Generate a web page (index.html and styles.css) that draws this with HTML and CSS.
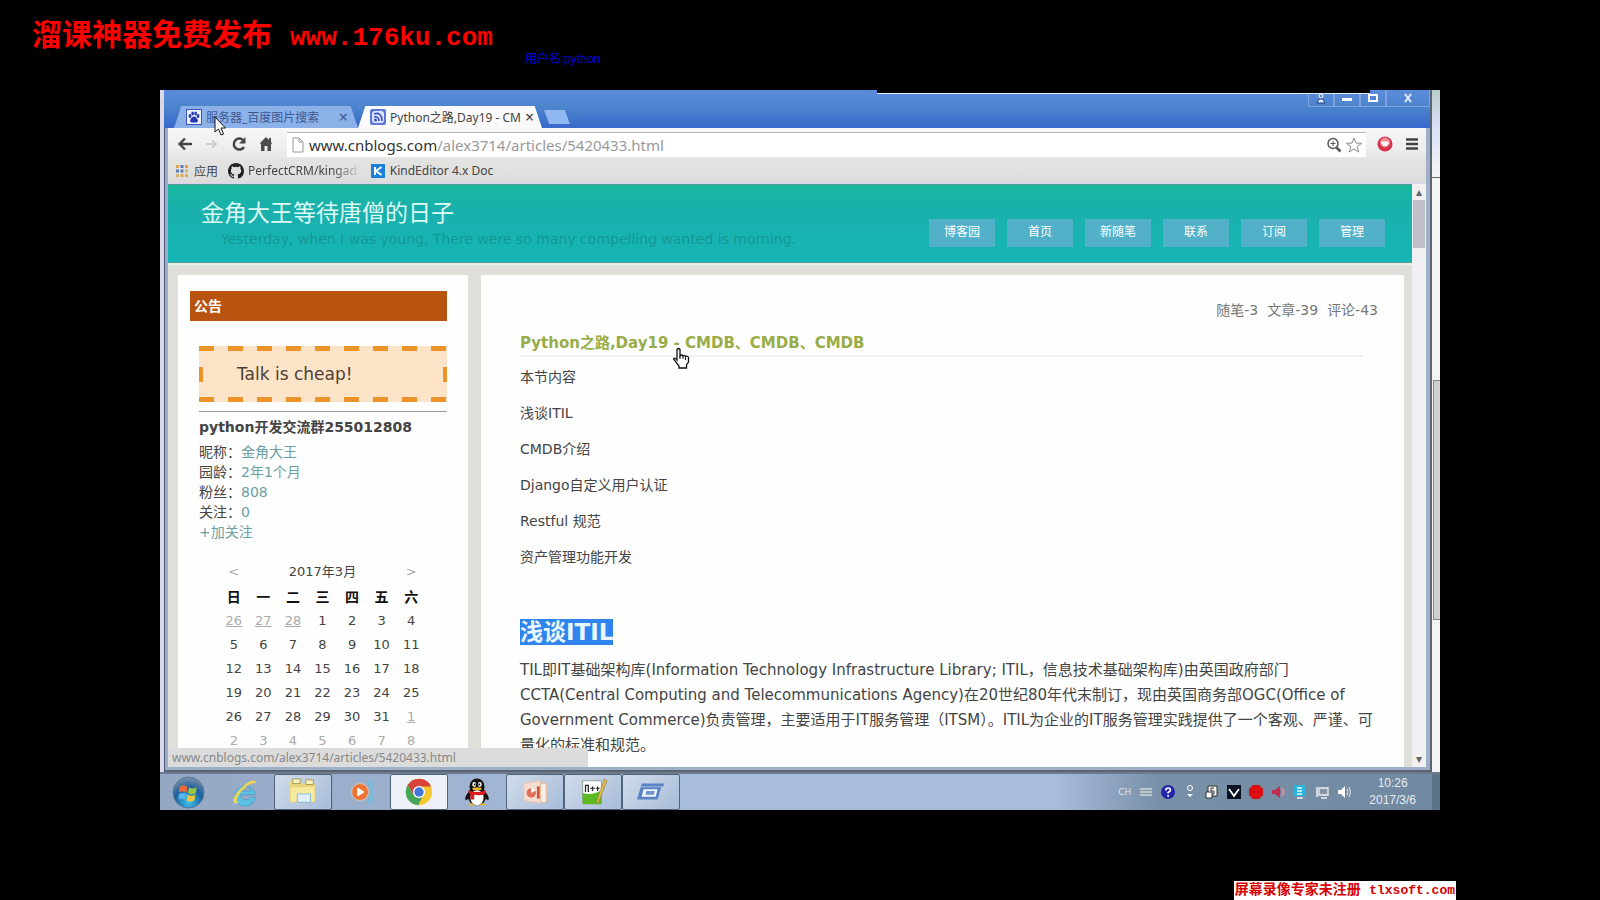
FILE: index.html
```
<!DOCTYPE html>
<html lang="zh-CN">
<head>
  <meta charset="utf-8">
  <title>Python之路,Day19</title>
  <meta name="viewport" content="width=device-width, initial-scale=1">
  <link rel="stylesheet" href="styles.css">
</head>
<body>

  <header class="banner">
    <p class="promo">溜课神器免费发布 <span class="promo-url">www.176ku.com</span></p>
    <p class="user-name">用户名:python</p>
  </header>

  <div class="desktop">
    <div class="workspace">
      <div class="window">

        <div class="title-bar">
          <div class="tabs">
            <div class="tab">
              <svg class="tab-icon" viewBox="0 0 16 16"><rect width="16" height="16" fill="#3a54c0"/><rect x="1" y="1" width="14" height="14" fill="#eef2ff"/><g fill="#2438b0"><ellipse cx="4" cy="7" rx="1.4" ry="2"/><ellipse cx="6.6" cy="4.4" rx="1.3" ry="2"/><ellipse cx="9.6" cy="4.4" rx="1.3" ry="2"/><ellipse cx="12" cy="7" rx="1.4" ry="2"/><path d="M8 7.500c2 0 4 3 4 4.500s-1.500 1.500-4 1.500-4 0-4-1.500 2-4.500 4-4.500z"/></g></svg>
              <span class="tab-text">服务器_百度图片搜索</span>
              <button class="tab-close" aria-label="关闭">×</button>
            </div>
            <div class="tab tab-active">
              <svg class="tab-icon" viewBox="0 0 16 16"><rect width="16" height="16" rx="2" fill="#5f78d8"/><rect x="2" y="2" width="12" height="12" rx="3" fill="#dfe6ff"/><path d="M4 5c5-2 8 1 8 7M4 8c3-1 5 1 5 4" fill="none" stroke="#3c50c8" stroke-width="1.600"/><circle cx="5.500" cy="11" r="1.500" fill="#3c50c8"/></svg>
              <span class="tab-text">Python之路,Day19 - CM</span>
              <button class="tab-close" aria-label="关闭">×</button>
            </div>
            <button class="new-tab" aria-label="新标签页"></button>
          </div>
          <div class="window-buttons">
            <button aria-label="用户"><svg viewBox="0 0 12 12"><circle cx="6" cy="4" r="2" fill="none" stroke="#fff"/><path d="M2 11l2-4h4l2 4z" fill="#dfe8fa" stroke="#1f3d86"/></svg></button>
            <button aria-label="最小化"><svg viewBox="0 0 12 12"><rect x="1" y="6" width="10" height="3" fill="#fff"/></svg></button>
            <button aria-label="最大化"><svg viewBox="0 0 12 12"><rect x="2" y="3" width="8" height="6" fill="none" stroke="#fff" stroke-width="2"/></svg></button>
            <button class="wide" aria-label="关闭窗口"><svg viewBox="0 0 12 12"><path d="M3 2l6 8M9 2l-6 8" stroke="#e6eefc" stroke-width="2"/></svg></button>
          </div>
        </div>

        <div class="toolbar">
          <button class="tool" aria-label="后退"><svg viewBox="0 0 16 16"><path d="M15 8H3M8 2.500L2.500 8 8 13.500" fill="none" stroke="#444" stroke-width="2.400"/></svg></button>
          <button class="tool" aria-label="前进"><svg viewBox="0 0 16 16"><path d="M2 8h10M8 4l4 4-4 4" fill="none" stroke="#cfcfcf" stroke-width="2"/></svg></button>
          <button class="tool" aria-label="刷新"><svg viewBox="0 0 16 16"><path d="M13 11a5.500 5.500 0 1 1-1-7" fill="none" stroke="#444" stroke-width="2.500"/><path d="M14.500 1v6.500H8z" fill="#444"/></svg></button>
          <button class="tool" aria-label="主页"><svg viewBox="0 0 16 16"><path d="M8 1l6 6-1 1.500V15h-3.500v-5h-3v5H3V8.500L2 7z" fill="#4c4c4c"/><path d="M11 2h2v4h-2z" fill="#4c4c4c"/></svg></button>
          <label class="address">
            <svg class="page-icon" viewBox="0 0 14 16"><path d="M2 1h6l4 4v10H2zM8 1v4h4" fill="#fff" stroke="#999"/></svg>
            <span class="address-text" role="textbox">www.cnblogs.com<span class="path">/alex3714/articles/5420433.html</span></span>
            <svg class="address-icon" viewBox="0 0 16 16"><circle cx="7" cy="6.500" r="5" fill="none" stroke="#555" stroke-width="1.500"/><path d="M4.500 6.500h5M7 4v5" stroke="#555"/><path d="M10.500 10.500l4 4" stroke="#555" stroke-width="2.500"/></svg>
            <svg class="address-icon" viewBox="0 0 16 16"><path d="M8 1l2 5 5.500.3-4.300 3.400 1.500 5.300L8 12l-4.700 3 1.500-5.300L.5 6.300 6 6z" fill="#fff" stroke="#8a8a8a"/></svg>
          </label>
          <button class="tool extension" aria-label="扩展"><svg viewBox="0 0 16 16"><circle cx="8" cy="8" r="7.500" fill="#d9304a"/><circle cx="8" cy="6.500" r="5" fill="#ee8c93"/><path d="M4.500 5.500h7v2L9.500 10h-3l-2-2.500z" fill="#fff"/></svg></button>
          <button class="tool" aria-label="菜单"><svg viewBox="0 0 16 16"><path d="M2 3.500h12M2 8h12M2 12.500h12" stroke="#444" stroke-width="2.600"/></svg></button>
        </div>

        <nav class="bookmarks">
          <a href="#">
            <svg viewBox="0 0 14 14"><g fill="#e0a34a"><path d="M1 1h3v3H1zM10 1h3v3h-3zM5.500 10h3v3h-3z"/></g><g fill="#5a7ab8"><path d="M5.500 1h3v3h-3zM1 5.500h3v3H1zM5.500 5.500h3v3h-3z"/></g><g fill="#d8b46a"><path d="M10 5.500h3v3h-3zM1 10h3v3H1zM10 10h3v3h-3z"/></g></svg>
            应用
          </a>
          <a href="#" class="github">
            <svg viewBox="0 0 16 16"><path fill="#222" d="M8 0C3.580 0 0 3.580 0 8c0 3.540 2.290 6.530 5.470 7.590.4.070.55-.17.55-.38 0-.19-.01-.82-.01-1.490-2.010.37-2.530-.49-2.690-.94-.09-.23-.48-.94-.82-1.130-.28-.15-.68-.52-.01-.53.63-.01 1.080.58 1.230.82.72 1.210 1.870.87 2.330.66.070-.52.28-.87.51-1.070-1.780-.2-3.640-.89-3.640-3.950 0-.87.31-1.590.82-2.150-.08-.2-.36-1.020.08-2.120 0 0 .67-.21 2.200.82a7.600 7.600 0 0 1 4 0c1.530-1.040 2.200-.82 2.200-.82.44 1.100.16 1.920.08 2.120.51.56.82 1.270.82 2.150 0 3.070-1.870 3.750-3.650 3.950.29.25.54.73.54 1.480 0 1.070-.01 1.930-.01 2.200 0 .21.15.46.55.38A8 8 0 0 0 16 8c0-4.420-3.580-8-8-8z"/></svg>
            <span class="fade">PerfectCRM/kingad</span>
          </a>
          <a href="#">
            <svg viewBox="0 0 14 14"><rect width="14" height="14" fill="#1a80d8"/><path d="M4 3v8M10.500 3L5 7l5.500 4" fill="none" stroke="#fff" stroke-width="2"/></svg>
            <span>KindEditor 4.x Doc</span>
          </a>
        </nav>

        <div class="viewport">
          <div class="page">
            <header class="blog-header">
              <div>
                <h1><a href="#">金角大王等待唐僧的日子</a></h1>
                <p class="subtitle">Yesterday, when I was young, There were so many compelling wanted is morning.</p>
              </div>
              <nav class="blog-nav">
                <a href="#">博客园</a>
                <a href="#">首页</a>
                <a href="#">新随笔</a>
                <a href="#">联系</a>
                <a href="#">订阅</a>
                <a href="#">管理</a>
              </nav>
            </header>

            <div class="columns">
              <aside class="sidebar">
                <h3 class="side-title">公告</h3>
                <div class="side-body">
                  <p class="quote">Talk is cheap!</p>
                  <p class="group">python开发交流群255012808</p>
                  <ul class="profile">
                    <li>昵称：<a href="#">金角大王</a></li>
                    <li>园龄：<a href="#">2年1个月</a></li>
                    <li>粉丝：<a href="#">808</a></li>
                    <li>关注：<a href="#">0</a></li>
                    <li><a href="#">+加关注</a></li>
                  </ul>
                </div>
                <table class="calendar">
                  <thead>
                    <tr class="month"><td><a href="#">&lt;</a></td><td colspan="5">2017年3月</td><td><a href="#">&gt;</a></td></tr>
                    <tr><th>日</th><th>一</th><th>二</th><th>三</th><th>四</th><th>五</th><th>六</th></tr>
                  </thead>
                  <tbody>
                    <tr><td class="other"><u>26</u></td><td class="other"><u>27</u></td><td class="other"><u>28</u></td><td>1</td><td>2</td><td>3</td><td>4</td></tr>
                    <tr><td>5</td><td>6</td><td>7</td><td>8</td><td>9</td><td>10</td><td>11</td></tr>
                    <tr><td>12</td><td>13</td><td>14</td><td>15</td><td>16</td><td>17</td><td>18</td></tr>
                    <tr><td>19</td><td>20</td><td>21</td><td>22</td><td>23</td><td>24</td><td>25</td></tr>
                    <tr><td>26</td><td>27</td><td>28</td><td>29</td><td>30</td><td>31</td><td class="other"><u>1</u></td></tr>
                    <tr><td class="other">2</td><td class="other">3</td><td class="other">4</td><td class="other">5</td><td class="other">6</td><td class="other">7</td><td class="other">8</td></tr>
                  </tbody>
                </table>
              </aside>

              <main class="article">
                <p class="stats"><span>随笔-3</span><span>文章-39</span><span>评论-43</span></p>
                <h2 class="article-title"><a href="#">Python之路,Day19 - CMDB、CMDB、CMDB</a></h2>
                <p>本节内容</p>
                <p>浅谈ITIL</p>
                <p>CMDB介绍</p>
                <p>Django自定义用户认证</p>
                <p>Restful 规范</p>
                <p>资产管理功能开发</p>
                <h2 class="section-title"><mark>浅谈ITIL</mark></h2>
                <p class="intro">TIL即IT基础架构库(Information Technology Infrastructure Library; ITIL，信息技术基础架构库)由英国政府部门<br>CCTA(Central Computing and Telecommunications Agency)在20世纪80年代末制订，现由英国商务部OGC(Office of<br>Government Commerce)负责管理，主要适用于IT服务管理（ITSM）。ITIL为企业的IT服务管理实践提供了一个客观、严谨、可<br>量化的标准和规范。</p>
              </main>
            </div>
          </div>
          <div class="scrollbar">
            <span class="arrow">▴</span>
            <div class="thumb"></div>
            <span class="arrow">▾</span>
          </div>
          <div class="status">www.cnblogs.com/alex3714/articles/5420433.html</div>
        </div>
      </div>

      <!-- edge of the window behind -->
      <div class="back-window">
        <div class="back-top"></div>
        <div class="back-track"><div class="back-thumb"></div></div>
      </div>
    </div>

    <div class="taskbar">
      <button class="task start" aria-label="开始"><svg viewBox="0 0 36 36"><defs><radialGradient id="orb" cx="50%" cy="80%" r="75%"><stop offset="0" stop-color="#3fc4ee"/><stop offset=".6" stop-color="#1d5f9c"/><stop offset="1" stop-color="#6f8ba8"/></radialGradient></defs><circle cx="18" cy="18" r="16" fill="url(#orb)" stroke="#5c7896"/><path d="M9 12q4-3 8 0l-1 6q-4-2-8 0z" fill="#e8683a"/><path d="M18.500 12.500q4 3 8 0l-1 6q-4 3-8 0z" fill="#9ac840"/><path d="M8 19.500q4-2 8 0l-1 6q-4-2-7 0z" fill="#58b4ec"/><path d="M17 20q4 3 8 0l-1 6q-4 3-8 0z" fill="#f4c636"/></svg></button>
      <button class="task" aria-label="Internet Explorer"><svg viewBox="0 0 32 32"><path d="M25 19H11a6 6 0 0 0 11 2.500h5A11 11 0 1 1 27 19zM11 15h11a5.500 5.500 0 0 0-11 0z" fill="#5cc0e4" stroke="#3592bf" stroke-width=".6"/><path d="M27 7c2-5-5-4-11 1C8 14 2 23 4 27c1 2 4 1 6 0-3 0-4-2-1-7C13 13 22 5 27 7z" fill="#ecd558"/></svg></button>
      <button class="task open" aria-label="资源管理器"><svg viewBox="0 0 32 32"><path d="M2 4h10l2 3h15v20H2z" fill="#e9d67e"/><path d="M5 2h8v5H5zM19 3h8v5h-8z" fill="#f8efc0" stroke="#a99758"/><path d="M3 11h25v15H3z" fill="#f8ea9e"/><path d="M10 18h14v9H10z" fill="#dff0fa" stroke="#82b5d0"/></svg></button>
      <button class="task open media" aria-label="媒体播放器"><svg viewBox="0 0 32 32"><path d="M23 3h3v26h-3zM27 4h2v24h-2z" fill="#78bad8"/><circle cx="15" cy="16" r="9" fill="#ee7331" stroke="#dfc6b8"/><path d="M12 11l8 5-8 5z" fill="#fff"/></svg></button>
      <button class="task open current" aria-label="Chrome"><svg viewBox="0 0 32 32"><circle cx="16" cy="16" r="14" fill="#f4c92e"/><path d="M16 2A14 14 0 0 1 29 10H16L10 19 4 8.500A14 14 0 0 1 16 2z" fill="#d8443a"/><path d="M4 8.500A14 14 0 0 0 15 30l6-11H10z" fill="#45a558"/><circle cx="16" cy="16" r="6.500" fill="#fff"/><circle cx="16" cy="16" r="5" fill="#4276dc"/></svg></button>
      <button class="task" aria-label="QQ"><svg viewBox="0 0 32 32"><path d="M7 16q-5 6-3 9l4-3zM25 16q5 6 3 9l-4-3z" fill="#111"/><ellipse cx="16" cy="20" rx="10" ry="10" fill="#111"/><ellipse cx="16" cy="10" rx="8" ry="8.500" fill="#111"/><ellipse cx="16" cy="22" rx="7" ry="8" fill="#fff"/><ellipse cx="13" cy="8" rx="2" ry="2.600" fill="#fff"/><ellipse cx="19" cy="8" rx="2" ry="2.600" fill="#fff"/><circle cx="13.500" cy="8" r="1"/><circle cx="18.500" cy="8" r="1"/><ellipse cx="16" cy="12.500" rx="5" ry="1.600" fill="#f0b428"/><path d="M7 14q9 4 18 0v4q-6 2-12 1v5h-4v-6l-2-1z" fill="#dc1c20"/><path d="M6 30q4-4 8 0zM18 30q4-4 8 0z" fill="#f0b428"/></svg></button>
      <button class="task open" aria-label="PowerPoint"><svg viewBox="0 0 32 32"><path d="M4 7l18-3v24L4 25z" fill="#f4ddd0" stroke="#e8c4b0"/><path d="M22 7h6v20h-6z" fill="#f8f0e8" stroke="#e2b998"/><circle cx="12" cy="17" r="5" fill="#dc7058"/><path d="M12 17V11l5 3z" fill="#fff"/><path d="M18 10h3v13h-3z" fill="#cf5438"/></svg></button>
      <button class="task open" aria-label="Notepad++"><svg viewBox="0 0 32 32"><path d="M5 4h20v24H5z" fill="#fff" stroke="#8fa08f"/><path d="M5 17q10 3 20-3v15H5z" fill="#5cb824"/><path d="M28 2l3 2-9 23-2 2v-4z" fill="#e0b94b" stroke="#8c7a34" stroke-width=".6"/><path d="M8 16v-7h3v7M13 12h5M15.500 10v5M19 12h4M21 10v5" fill="none" stroke="#222" stroke-width="1.300"/></svg></button>
      <button class="task open" aria-label="远程窗口"><svg viewBox="0 0 32 32"><path d="M6 7h24l-1 3H5z" fill="#5a82c4"/><path d="M5 11h22l-4 13H1z" fill="#5a82c4"/><path d="M8 13h15l-2 8H6z" fill="#f0f4fb"/><path d="M11 15h9l-1 4h-9z" fill="#6e94cc"/></svg></button>

      <div class="tray">
        <span class="lang">CH</span>
        <svg viewBox="0 0 14 14"><path d="M1 4h12M1 7h12M1 10h12" stroke="#d5dcd5" stroke-width="1.500"/></svg>
        <svg viewBox="0 0 14 14"><circle cx="7" cy="7" r="7" fill="#2226a8"/><path d="M4.800 5.400q0-2.400 2.300-2.400t2.300 2q0 1.300-2.300 2.600v1M7.100 10v1.800" fill="none" stroke="#fff" stroke-width="1.700"/></svg>
        <svg viewBox="0 0 14 14"><circle cx="7" cy="3" r="2.500" fill="none" stroke="#fff"/><path d="M4 9h6l-3 3z" fill="#fff"/></svg>
        <svg viewBox="0 0 14 14"><path d="M3 1h9v10H3z" fill="#f4f4ee" stroke="#333"/><path d="M1 7h6v6H1z" fill="#fff" stroke="#333"/><path d="M9 3H6v3h3v3H7" fill="none" stroke="#333"/></svg>
        <svg viewBox="0 0 14 14"><rect width="14" height="14" fill="#0a1020"/><path d="M2 4l5 7 5-7" fill="none" stroke="#fff" stroke-width="1.800"/></svg>
        <svg viewBox="0 0 14 14"><path d="M4 0h6l4 4v6l-4 4H4l-4-4V4z" fill="#dc0c10"/></svg>
        <svg viewBox="0 0 14 14"><path d="M1 5h3l5-4v12L4 9H1z" fill="#c82c4c"/><path d="M11 3q3 4 0 8" fill="none" stroke="#e08c9c" stroke-width="2"/></svg>
        <svg viewBox="0 0 14 14"><rect x="1" width="11" height="11" fill="#2cb4dc"/><path d="M4 3h5M4 6h5M4 9h5M4 13h6" stroke="#e4fafc" stroke-width="1.300"/></svg>
        <svg viewBox="0 0 14 14"><path d="M4 3h9v7H4z" fill="#8894a4" stroke="#eee" stroke-width="1.300"/><path d="M6 13h6M2 2v10" stroke="#eee" stroke-width="1.500"/></svg>
        <svg viewBox="0 0 14 14"><path d="M1 5h3l4-4v12L4 9H1z" fill="#fff"/><path d="M10 4q2 3 0 6M12 2q3 5 0 10" fill="none" stroke="#e4e8ec"/></svg>
        <time class="clock">10:26<br>2017/3/6</time>
        <button class="show-desktop" aria-label="显示桌面"></button>
      </div>
    </div>

    <div class="screen-edge"></div>
    <svg class="pointer pointer-arrow" viewBox="0 0 12 20"><path d="M1 1v15l3.500-3 2.500 6 2.500-1-2.500-6H11.500z" fill="#fff" stroke="#111"/></svg>
    <svg class="pointer pointer-hand" viewBox="0 0 18 22"><path d="M5 13V2.500q1.500-2 3 0V9q1.500-2 3 0 1.500-1.500 2.500.5 2-1 3 1V15l-2 3v3H7v-2L1.500 12q1-2 3.500 1z" fill="#fff" stroke="#111" stroke-width="1.300"/><path d="M8 9v3M11 9v3M13.500 10v3" stroke="#111"/></svg>
  </div>

  <footer class="footer">
    <p class="recorder">屏幕录像专家未注册 <span class="recorder-url">tlxsoft.com</span></p>
  </footer>

</body>
</html>
```
FILE: styles.css
```
* {
  box-sizing: border-box;
}

body {
  margin: 0;
  height: 100vh;
  display: flex;
  flex-direction: column;
  background-color: black;
  font-family: "DejaVu Sans", "Noto Sans CJK SC", sans-serif;
  font-size: 14px;
  color: #444;
}

p, h1, h2, h3, ul {
  margin: 0;
  padding: 0;
}

ul {
  list-style: none;
}

a {
  color: inherit;
  text-decoration: none;
}

button {
  border: none;
  background: none;
  padding: 0;
  font-family: inherit;
  color: inherit;
}

svg {
  display: block;
  flex-shrink: 0;
}

/* text above the desktop */

.banner {
  flex: 0 0 90px;
  display: flex;
  align-items: flex-start;
  gap: 32px;
  padding: 17px 32px 0;
}

.promo {
  color: red;
  font-family: "Liberation Mono", "Noto Sans CJK SC", monospace;
  font-size: 30px;
  font-weight: bold;
  line-height: 40px;
  white-space: nowrap;
}

.promo-url {
  font-size: 26px;
}

.user-name {
  color: #0000d8;
  font-family: "Liberation Sans", "Noto Sans CJK SC", sans-serif;
  font-size: 12px;
  line-height: 16px;
  padding-top: 34px;
}

/* desktop */

.desktop {
  position: relative;
  flex: 1;
  min-height: 0;
  margin: 0 160px;
  display: flex;
  flex-direction: column;
  background-color: #8fa4be;
}

.workspace {
  flex: 1;
  min-height: 0;
  display: flex;
}

.window {
  flex: 1;
  min-width: 0;
  display: flex;
  flex-direction: column;
  border-left: 4px solid #dcd8ec;
  padding: 0 6px 5px 4px;
  background-color: #9db0c8;
  box-shadow: inset 1px 0 #4a5478, inset -2px -2px #5c6474;
}

.title-bar {
  flex: 0 0 38px;
  margin: 0 -4px;
  padding-left: 10px;
  display: flex;
  justify-content: space-between;
  background: linear-gradient(#5c8cdc, #4c84cc 45%, #3868cc);
}

.tabs {
  display: flex;
  align-items: flex-end;
}

.tab {
  display: flex;
  align-items: center;
  width: 184px;
  height: 22px;
  padding: 0 10px 0 12px;
  gap: 4px;
  background-color: #8cb0e8;
  color: #3c5890;
  font-family: "Noto Sans", "Noto Sans CJK SC", sans-serif;
  font-size: 12px;
  clip-path: polygon(4% 0, 96% 0, 100% 100%, 0 100%);
}

.tab-active {
  background-color: #fafafa;
  color: #444;
}

.tab-icon {
  width: 16px;
  height: 16px;
}

.tab-text {
  flex: 1;
  white-space: nowrap;
}

.tab-close {
  font-size: 16px;
  line-height: 16px;
}

.new-tab {
  width: 26px;
  height: 14px;
  margin: 0 0 4px 2px;
  background-color: #90b8f0;
  clip-path: polygon(0 0, 80% 0, 100% 100%, 20% 100%);
}

.window-buttons {
  display: flex;
  height: 17px;
}

.window-buttons button {
  width: 26px;
  display: flex;
  justify-content: center;
  align-items: center;
  border: 1px solid #7ea2e0;
  border-top: none;
}

.window-buttons .wide {
  width: 44px;
}

.window-buttons svg {
  width: 12px;
  height: 12px;
}

.toolbar {
  flex: 0 0 30px;
  display: flex;
  align-items: center;
  padding: 2px 6px 0 9px;
  gap: 11px;
  background: linear-gradient(#f8f8f8, #e8e8e8);
}

.tool svg {
  width: 16px;
  height: 16px;
}

.address {
  flex: 1;
  height: 25px;
  display: flex;
  align-items: center;
  gap: 4px;
  margin-left: 2px;
  padding: 0 4px 0 4px;
  background-color: white;
  border-top: 1px solid #b8b8b8;
}

.page-icon {
  width: 14px;
  height: 16px;
}

.address-text {
  flex: 1;
  color: #333;
  font-family: "Noto Sans", sans-serif;
  font-size: 15px;
  line-height: 24px;
}

.path {
  color: #999;
}

.address-icon {
  width: 16px;
  height: 16px;
}

.bookmarks {
  flex: 0 0 26px;
  display: flex;
  align-items: center;
  padding: 0 7px;
  gap: 10px;
  background: linear-gradient(#e4e4e2, #dcdcdc);
  border-bottom: 1px solid #e0d0f4;
  font-family: "Noto Sans", "Noto Sans CJK SC", sans-serif;
  font-size: 12px;
}

.bookmarks a {
  display: flex;
  align-items: center;
  gap: 5px;
}

.bookmarks svg {
  width: 14px;
  height: 14px;
}

.bookmarks .github {
  gap: 4px;
}

.bookmarks .github svg {
  width: 16px;
  height: 16px;
}

.fade {
  padding-right: 4px;
  -webkit-mask-image: linear-gradient(to right, black 75%, transparent);
  mask-image: linear-gradient(to right, black 75%, transparent);
}

/* web page */

.viewport {
  position: relative;
  flex: 1;
  min-height: 0;
  display: flex;
  background-color: #f2f0f2;
}

.page {
  flex: 1;
  min-width: 0;
  overflow: hidden;
  display: flex;
  flex-direction: column;
  background-color: #dfe0da;
}

.blog-header {
  flex: 0 0 79px;
  display: flex;
  justify-content: space-between;
  padding: 0 27px 0 33px;
  background: linear-gradient(#18b89c, #1ab0ac 30%, #14b6b6);
  border-top: 1px solid #5c9c98;
  border-bottom: 1px solid #5c9c98;
}

.blog-header h1 {
  padding-top: 12px;
  color: #dcfaf6;
  font-size: 23px;
  font-weight: normal;
  line-height: 32px;
}

.subtitle {
  padding-left: 20px;
  color: #159794;
  font-size: 14px;
  line-height: 20px;
  white-space: nowrap;
}

.blog-nav {
  display: flex;
  gap: 12px;
  padding-top: 34px;
}

.blog-nav a {
  width: 66px;
  height: 28px;
  background-color: #52b0c8;
  color: white;
  font-size: 12px;
  line-height: 26px;
  text-align: center;
}

.columns {
  flex: 1;
  min-height: 0;
  display: flex;
  gap: 13px;
  padding: 10px 8px 0 10px;
  border-top: 2px solid #e4f4e4;
}

.sidebar {
  flex: 0 0 290px;
  padding: 16px 21px 0 12px;
  background-color: #fdfefd;
}

.side-title {
  padding-left: 4px;
  background-color: #b85310;
  color: white;
  font-size: 14px;
  line-height: 30px;
}

.side-body {
  padding: 25px 0 0 9px;
}

/* dashes: top, bottom, left, right, then the fill */
.quote {
  padding: 5px 38px;
  background:
    repeating-linear-gradient(to right, #ec9428 0 15px, transparent 15px 29px) top / 100% 5px no-repeat,
    repeating-linear-gradient(to right, #ec9428 0 15px, transparent 15px 29px) bottom / 100% 5px no-repeat,
    linear-gradient(#ec9428, #ec9428) left / 4px 15px no-repeat,
    linear-gradient(#ec9428, #ec9428) right / 4px 15px no-repeat,
    #fde4c8;
  color: #4c4034;
  font-size: 17px;
  line-height: 46px;
}

.group {
  margin-top: 9px;
  border-top: 1px solid #999;
  font-weight: bold;
  line-height: 30px;
  white-space: nowrap;
}

.profile {
  line-height: 20px;
}

.profile a {
  color: #6ca0a4;
}

.calendar {
  width: 207px;
  margin: 18px 0 0 29px;
  border-collapse: collapse;
  table-layout: fixed;
  font-size: 13px;
  text-align: center;
}

.calendar td,
.calendar th {
  height: 24px;
  padding: 0;
  line-height: 24px;
}

.calendar th {
  height: 25px;
  color: #111;
  font-size: 14px;
}

.calendar .other,
.month a {
  color: #aaa;
}

.article {
  flex: 1;
  min-width: 0;
  padding: 23px 41px 0 39px;
  background-color: #fdfefd;
}

.article p {
  margin-bottom: 11px;
  line-height: 25px;
  white-space: nowrap;
}

.article .stats {
  display: flex;
  justify-content: flex-end;
  gap: 9px;
  margin: 0 -15px 8px 0;
  color: #777;
}

.article .intro {
  font-size: 15px;
}

.article-title {
  margin-bottom: 8px;
  border-bottom: 2px solid #f0f1ee;
  color: #98ac48;
  font-size: 15px;
  line-height: 24px;
}

.section-title {
  margin: 48px 0 12px;
  font-size: 23px;
  line-height: 28px;
}

.section-title mark {
  display: inline-block;
  background-color: #2f84ee;
  color: #e8f6ff;
  line-height: 26px;
}

.scrollbar {
  flex: 0 0 14px;
  display: flex;
  flex-direction: column;
  align-items: center;
  background-color: #f2f0f2;
}

.scrollbar .arrow {
  color: #666;
  font-size: 12px;
  line-height: 16px;
}

.thumb {
  width: 12px;
  height: 48px;
  margin-bottom: auto;
  background-color: #c0bec8;
}

.status {
  position: absolute;
  left: 0;
  bottom: 0;
  width: 420px;
  padding-left: 4px;
  background-color: #dcdcdc;
  border-top-right-radius: 4px;
  color: #888;
  font-family: "Noto Sans", sans-serif;
  font-size: 12px;
  line-height: 19px;
}

.back-window {
  flex: 0 0 8px;
  display: flex;
  flex-direction: column;
  background-color: #f4f4f4;
}

.back-top {
  flex: 0 0 88px;
  background: linear-gradient(#b8ccc8, #d8e0f4 40%, #f4f4f4);
  border-bottom: 1px solid #666;
}

.back-track {
  flex: 1;
  padding: 202px 0 0 1px;
}

.back-thumb {
  height: 240px;
  border: 1px solid #888;
  border-right: none;
  background-color: #d0d0d0;
}

/* taskbar */

.taskbar {
  flex: 0 0 38px;
  display: flex;
  border-top: 2px solid #6c7c90;
  background: linear-gradient(to right, #94a8c4, #a8bcdc 40%, #a8bcdc 70%, #7890a8 78%, #7088a0);
}

.task {
  width: 58px;
  display: flex;
  justify-content: center;
  align-items: center;
}

.task svg {
  width: 30px;
  height: 30px;
}

.task.start {
  width: 56px;
}

.task.start svg {
  width: 35px;
  height: 35px;
}

.task.open {
  border: 1px solid #50647c;
  border-radius: 2px;
  background: linear-gradient(135deg, #d0dcec, #a8bcd8);
}

.task.media {
  border-color: #94a8c4;
  background: none;
}

.task.current {
  background: #edf1f7;
}

.tray {
  flex: 1;
  display: flex;
  justify-content: flex-end;
  align-items: center;
  gap: 8px;
}

.tray svg {
  width: 14px;
  height: 14px;
}

.lang {
  color: #dde4e4;
  font-size: 9px;
}

.clock {
  margin: 0 8px 0 10px;
  color: #e8eef4;
  font-family: "Liberation Sans", sans-serif;
  font-size: 12px;
  line-height: 17px;
  text-align: center;
}

.show-desktop {
  align-self: stretch;
  width: 8px;
  background-color: #5c7488;
}

/* things lying over the desktop */

.screen-edge {
  position: absolute;
  top: 0;
  left: 56%;
  right: 70px;
  height: 4px;
  background-color: black;
  border-bottom: 1px solid #d8ecfc;
}

.pointer {
  position: absolute;
}

.pointer-arrow {
  left: 54px;
  top: 26px;
  width: 12px;
  height: 20px;
}

.pointer-hand {
  left: 512px;
  top: 257px;
  width: 18px;
  height: 22px;
}

/* text below the desktop */

.footer {
  flex: 0 0 90px;
  display: flex;
  justify-content: flex-end;
  align-items: flex-end;
  padding-right: 144px;
}

.recorder {
  padding: 0 1px;
  background-color: white;
  color: #d80000;
  font-family: "Liberation Mono", "Noto Sans CJK SC", monospace;
  font-size: 14px;
  font-weight: bold;
  line-height: 18px;
}

.recorder-url {
  font-size: 13px;
}
```
